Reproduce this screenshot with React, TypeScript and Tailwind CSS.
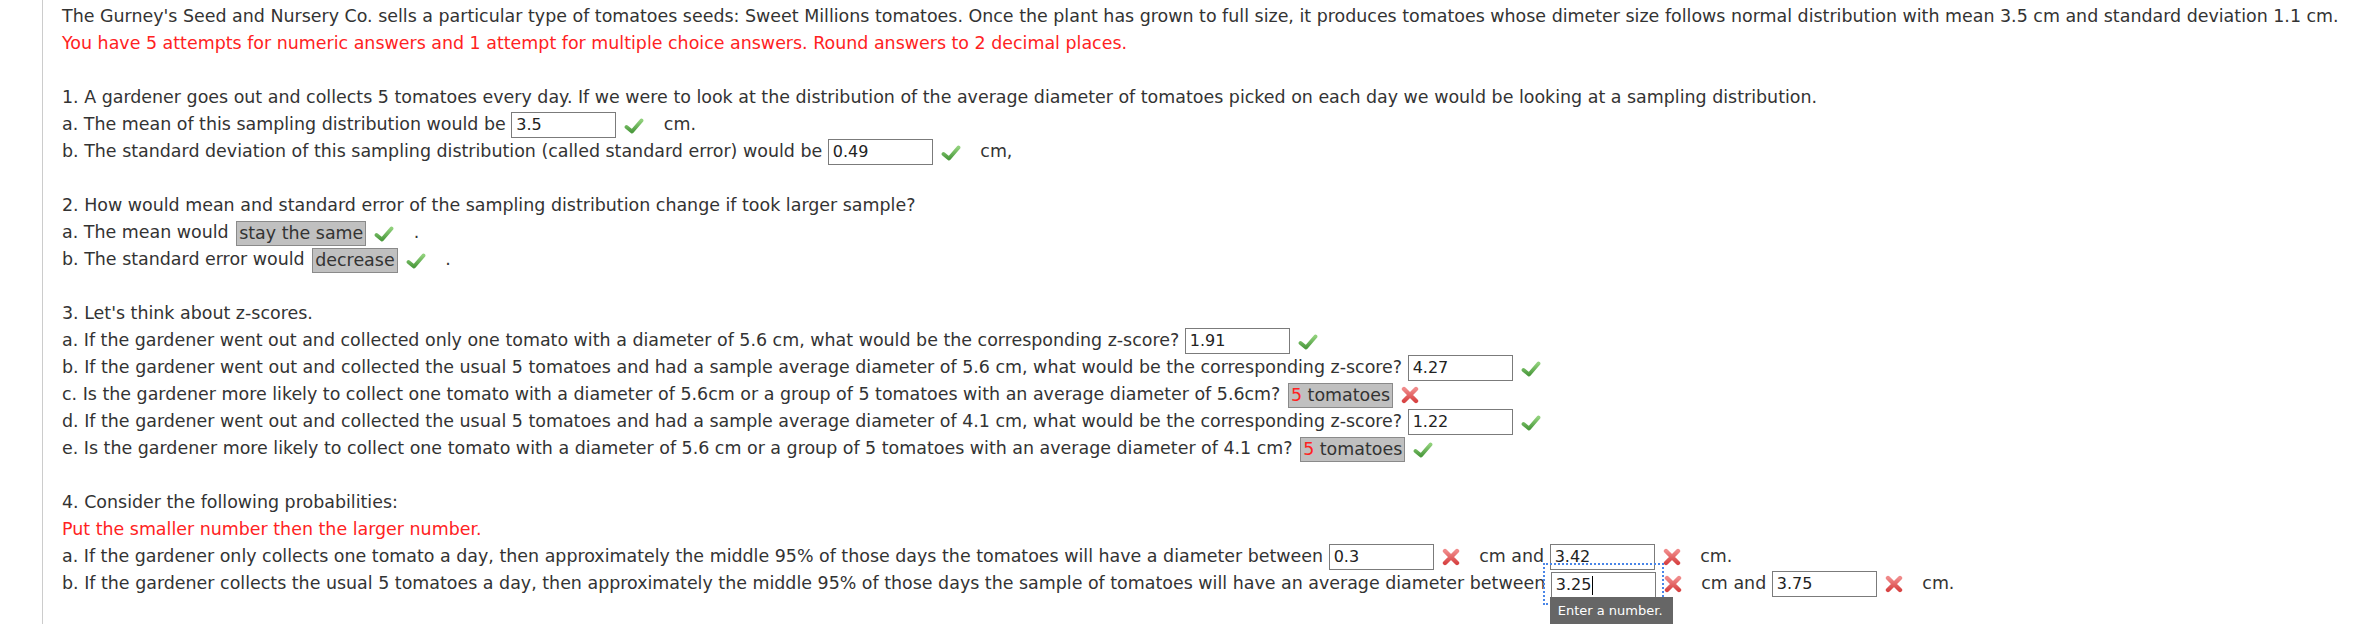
import type { ReactNode } from "react";

function Check() {
  return (
    <svg width="20" height="16" viewBox="0 0 20 16" className="ml-[8px] mr-[14px] inline-block align-[-4px]">
      <defs>
        <linearGradient id="gk" x1="0" y1="0" x2="0" y2="1">
          <stop offset="0" stopColor="#8fd07a" />
          <stop offset="1" stopColor="#4d9b3f" />
        </linearGradient>
      </defs>
      <path d="M2.5 9 L8 13.5 L17.5 2.5" fill="none" stroke="url(#gk)" strokeWidth="3.8" strokeLinecap="round" strokeLinejoin="round" />
    </svg>
  );
}

function Cross() {
  return (
    <svg width="20" height="18" viewBox="0 0 20 18" className="ml-[7px] mr-[13px] inline-block align-[-4px]">
      <defs>
        <linearGradient id="gx" x1="0" y1="0" x2="0" y2="1">
          <stop offset="0" stopColor="#f08a8a" />
          <stop offset="1" stopColor="#d84545" />
        </linearGradient>
      </defs>
      <path d="M4 3 L16 15 M16 3 L4 15" fill="none" stroke="url(#gx)" strokeWidth="4.4" strokeLinecap="round" />
    </svg>
  );
}

function Box({ children }: { children: ReactNode }) {
  return (
    <span className="inline-block h-[26px] w-[105px] border border-[#7b7b7b] bg-white px-[4px] align-middle text-[16px] leading-[24px] text-[#222]">
      {children}
    </span>
  );
}

function Pick({ children }: { children: ReactNode }) {
  return (
    <span className="ml-[2px] inline-block h-[25px] border border-[#8a8a8a] bg-[#c0c0c0] px-[2px] align-middle leading-[23px] text-[#333]">
      {children}
    </span>
  );
}

function Row({ children, red }: { children?: ReactNode; red?: boolean }) {
  return (
    <div className={red ? "h-[27px] whitespace-nowrap leading-[27px] text-[#f22]" : "h-[27px] whitespace-nowrap leading-[27px]"}>
      {children}
    </div>
  );
}

export default function App() {
  return (
    <div className="h-[624px] w-[2380px] overflow-hidden bg-white font-['DejaVu_Sans',Verdana,sans-serif] text-[17.45px] text-[#333]">
      <div className="ml-[42px] h-full border-l border-[#cccccc] pl-[19px] pt-[3px]">
        <Row>
          The Gurney's Seed and Nursery Co. sells a particular type of tomatoes seeds: Sweet Millions tomatoes. Once the plant has grown to full size, it produces tomatoes whose dimeter size follows normal distribution with mean 3.5 cm and standard deviation 1.1 cm.
        </Row>
        <Row red>You have 5 attempts for numeric answers and 1 attempt for multiple choice answers. Round answers to 2 decimal places.</Row>
        <Row />
        <Row>
          1. A gardener goes out and collects 5 tomatoes every day. If we were to look at the distribution of the average diameter of tomatoes picked on each day we would be looking at a sampling distribution.
        </Row>
        <Row>
          a. The mean of this sampling distribution would be <Box>3.5</Box>
          <Check /> cm.
        </Row>
        <Row>
          b. The standard deviation of this sampling distribution (called standard error) would be <Box>0.49</Box>
          <Check /> cm,
        </Row>
        <Row />
        <Row>2. How would mean and standard error of the sampling distribution change if took larger sample?</Row>
        <Row>
          a. The mean would <Pick>stay the same</Pick>
          <Check /> .
        </Row>
        <Row>
          b. The standard error would <Pick>decrease</Pick>
          <Check /> .
        </Row>
        <Row />
        <Row>3. Let's think about z-scores.</Row>
        <Row>
          a. If the gardener went out and collected only one tomato with a diameter of 5.6 cm, what would be the corresponding z-score? <Box>1.91</Box>
          <Check />
        </Row>
        <Row>
          b. If the gardener went out and collected the usual 5 tomatoes and had a sample average diameter of 5.6 cm, what would be the corresponding z-score? <Box>4.27</Box>
          <Check />
        </Row>
        <Row>
          c. Is the gardener more likely to collect one tomato with a diameter of 5.6cm or a group of 5 tomatoes with an average diameter of 5.6cm?{" "}
          <Pick>
            <span className="text-[#f22]">5</span> tomatoes
          </Pick>
          <Cross />
        </Row>
        <Row>
          d. If the gardener went out and collected the usual 5 tomatoes and had a sample average diameter of 4.1 cm, what would be the corresponding z-score? <Box>1.22</Box>
          <Check />
        </Row>
        <Row>
          e. Is the gardener more likely to collect one tomato with a diameter of 5.6 cm or a group of 5 tomatoes with an average diameter of 4.1 cm?{" "}
          <Pick>
            <span className="text-[#f22]">5</span> tomatoes
          </Pick>
          <Check />
        </Row>
        <Row />
        <Row>4. Consider the following probabilities:</Row>
        <Row red>Put the smaller number then the larger number.</Row>
        <Row>
          a. If the gardener only collects one tomato a day, then approximately the middle 95% of those days the tomatoes will have a diameter between <Box>0.3</Box>
          <Cross /> cm and <Box>3.42</Box>
          <Cross /> cm.
        </Row>
        <Row>
          b. If the gardener collects the usual 5 tomatoes a day, then approximately the middle 95% of those days the sample of tomatoes will have an average diameter between{" "}
          <span className="relative inline-block align-middle">
            <span className="pointer-events-none absolute left-[-8px] top-[-8px] h-[42px] w-[121px] border-2 border-dotted border-[#4a86e8]" />
            <Box>
              3.25
              <span className="ml-[1px] inline-block h-[19px] w-[1px] bg-black align-middle" />
            </Box>
            <span className="absolute left-[-1px] top-[26px] z-10 h-[27px] w-[123px] bg-[#666] pl-[8px] text-[13px] leading-[27px] text-white">
              Enter a number.
            </span>
          </span>
          <Cross /> cm and <Box>3.75</Box>
          <Cross /> cm.
        </Row>
      </div>
    </div>
  );
}
